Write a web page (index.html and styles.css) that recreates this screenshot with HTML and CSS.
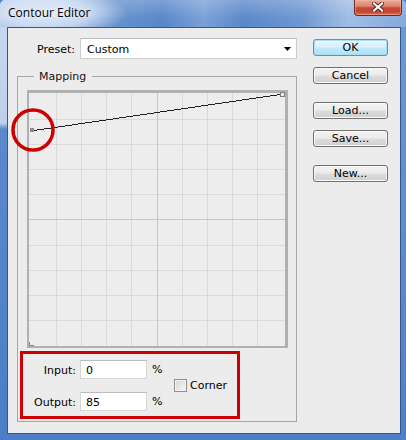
FILE: index.html
```html
<!DOCTYPE html>
<html>
<head>
<meta charset="utf-8">
<title>Contour Editor</title>
<link rel="stylesheet" href="styles.css">
</head>
<body>
<div class="window">
  <div class="titlebar">
    <span class="title">Contour Editor</span>
    <button class="close" aria-label="Close">
      <svg width="12" height="10" viewBox="0 0 12 10">
        <path d="M2 1.5 L10 8.5 M10 1.5 L2 8.5" stroke="#4a2420" stroke-width="4" stroke-linecap="square" fill="none"/>
        <path d="M2 1.5 L10 8.5 M10 1.5 L2 8.5" stroke="#ffffff" stroke-width="2.2" stroke-linecap="square" fill="none"/>
      </svg>
    </button>
  </div>
  <div class="client">
    <div class="main">
      <div class="preset-row">
        <label class="preset-label">Preset:</label>
        <div class="select">
          <span>Custom</span>
          <svg class="arrow" width="7" height="4" viewBox="0 0 7 4"><path d="M0 0 H7 L3.5 4 Z" fill="#000"/></svg>
        </div>
      </div>
      <fieldset class="group">
        <legend>Mapping</legend>
        <div class="graph">
          <svg width="256" height="253" viewBox="0 0 256 253" shape-rendering="crispEdges">
            <g stroke="#dadada" stroke-width="1">
              <path d="M27.5 0 V253 M52.5 0 V253 M77.5 0 V253 M102.5 0 V253 M153.5 0 V253 M178.5 0 V253 M203.5 0 V253 M228.5 0 V253"/>
              <path d="M0 26.5 H256 M0 51.5 H256 M0 76.5 H256 M0 101.5 H256 M0 152.5 H256 M0 177.5 H256 M0 202.5 H256 M0 227.5 H256"/>
            </g>
            <g stroke="#c6c6c6" stroke-width="1">
              <path d="M128.5 0 V253 M0 126.5 H256"/>
            </g>
            <path d="M0.5 249 V252.5 H5" stroke="#8a8a8a" fill="none"/>
            <path d="M5 37.5 L251 1.5" stroke="#231f20" stroke-width="1" fill="none"/>
            <rect x="1" y="35" width="4" height="4" fill="#8c8c8c"/>
            <rect x="251.5" y="-0.5" width="4" height="4" fill="#efefef" stroke="#7c7c7c"/>
          </svg>
        </div>
        <div class="fields">
          <label class="f-label r1">Input:</label>
          <div class="input r1">0</div>
          <span class="pct r1">%</span>
          <label class="f-label r2">Output:</label>
          <div class="input r2">85</div>
          <span class="pct r2">%</span>
          <div class="corner"><span class="check"></span><span>Corner</span></div>
        </div>
      </fieldset>
    </div>
    <div class="buttons">
      <button class="btn default">OK</button>
      <button class="btn">Cancel</button>
      <button class="btn gap">Load...</button>
      <button class="btn">Save...</button>
      <button class="btn gap">New...</button>
    </div>
  </div>
  <svg class="mark-circle" width="46" height="46" viewBox="0 0 46 46">
    <circle cx="23" cy="23" r="20" fill="none" stroke="#cc0000" stroke-width="3.5"/>
  </svg>
  <div class="mark-rect"></div>
</div>
</body>
</html>
```

FILE: styles.css
```css
* { box-sizing: border-box; }

html, body {
  margin: 0;
  padding: 0;
  background: #4d7ec6;
}

.window {
  position: relative;
  width: 406px;
  height: 440px;
  overflow: hidden;
  font-family: "DejaVu Sans", "Liberation Sans", sans-serif;
  font-size: 11px;
  color: #000;
  background:
    linear-gradient(to bottom, #c6d8ef 0, #bcd0eb 96px, #5b89cb 102px, #4c7dc5 100%) left 0 top 27px / 7px 413px no-repeat,
    linear-gradient(to bottom, #6d98d3 0, #4e7fc7 100%) right 0 top 27px / 6px 413px no-repeat,
    #4d7ec6;
  border-radius: 5px 5px 3px 3px;
}

.titlebar {
  height: 27px;
  display: flex;
  justify-content: space-between;
  align-items: flex-start;
  padding: 0 4px 0 8px;
  background:
    linear-gradient(to bottom, rgba(255,255,255,0.22), rgba(255,255,255,0) 70%),
    radial-gradient(ellipse 80px 24px at 48px 13px, rgba(226,236,250,0.95) 0%, rgba(220,232,248,0.7) 55%, rgba(220,232,248,0) 100%),
    linear-gradient(to right, #aac4e8 0%, #93b3df 14%, #6892cf 28%, #5887c9 40%, #7aa0d7 50%, #5b88ca 60%, #6e97d2 74%, #a0bde4 86%, #86a9db 100%);
}

.title {
  font-family: "Open Sans", "DejaVu Sans", sans-serif;
  font-size: 12px;
  line-height: 14px;
  margin-top: 6px;
  color: #000;
  text-shadow: 0 0 6px rgba(255,255,255,0.9);
}

.close {
  width: 48px;
  height: 16px;
  padding: 0;
  margin: 0;
  border: 1px solid #6b2a20;
  border-top: none;
  border-radius: 0 0 4px 4px;
  background: linear-gradient(to bottom, #e8a997 0%, #dc8774 40%, #c94a34 52%, #c6452f 78%, #d9735a 100%);
  box-shadow: inset 0 0 0 1px rgba(255,190,170,0.45);
  display: flex;
  align-items: center;
  justify-content: center;
}

.close svg { display: block; margin-top: -1px; }

.client {
  margin-left: 7px;
  width: 394px;
  height: 407px;
  background: #ececec;
  border: 1px solid #34568a;
  padding: 10px 0 0 9px;
  display: flex;
  align-items: flex-start;
}

.main {
  width: 280px;
  display: flex;
  flex-direction: column;
}

.preset-row {
  display: flex;
  align-items: center;
  height: 21px;
}

.preset-label {
  width: 58px;
  text-align: right;
  margin-right: 5px;
  padding-top: 1px;
}

.select {
  flex: 1;
  height: 21px;
  background: #fff;
  border: 1px solid #cdcdcd;
  border-top-color: #bdbdbd;
  display: flex;
  align-items: center;
  justify-content: space-between;
  padding: 1px 5px 0 6px;
}

.arrow { display: block; }

.group {
  margin: 11px 0 0 0;
  padding: 0 0 10px 0;
  border: 1px solid #a6a6a6;
  min-inline-size: 0;
}

.group legend {
  margin-left: 16px;
  padding: 0 6px 0 5px;
  line-height: 13px;
  color: #111;
}

.graph {
  width: 261px;
  height: 258px;
  margin: 7px 0 0 9px;
  border-style: solid;
  border-color: #b0b0b0;
  border-width: 3px 3px 2px 2px;
  background: #ededed;
}

.graph svg { display: block; overflow: visible; }

.fields {
  margin-top: 12px;
  display: grid;
  grid-template-columns: 62px 67px 27px auto;
  grid-template-rows: 19px 19px;
  row-gap: 13px;
  align-items: center;
}

.f-label {
  grid-column: 1;
  text-align: right;
  padding-right: 4px;
  padding-top: 1px;
}

.r1 { grid-row: 1; }
.r2 { grid-row: 2; }

.input {
  grid-column: 2;
  height: 19px;
  background: #fff;
  border: 1px solid #d6d6d6;
  border-top-color: #bdbdbd;
  padding: 1px 0 0 5px;
  line-height: 17px;
}

.pct {
  grid-column: 3;
  padding-left: 5px;
}

.corner {
  grid-column: 4;
  grid-row: 1 / span 2;
  display: flex;
  align-items: center;
}

.check {
  width: 13px;
  height: 13px;
  border: 1px solid #8e8f8f;
  background: linear-gradient(135deg, #d2d2d2 0%, #e6e6e6 50%, #fbfbfb 100%);
  box-shadow: inset 0 0 0 1px #f3f3f3;
  margin-right: 3px;
}

.buttons {
  margin: 1px 0 0 16px;
  display: flex;
  flex-direction: column;
  gap: 11px;
}

.btn {
  width: 75px;
  height: 17px;
  padding: 0;
  margin: 0;
  font-family: "DejaVu Sans", "Liberation Sans", sans-serif;
  font-size: 11px;
  line-height: 15px;
  color: #000;
  border: 1px solid #707070;
  border-radius: 3px;
  background: linear-gradient(to bottom, #f3f3f3 0%, #ebebeb 48%, #dddddd 52%, #cfcfcf 100%);
  box-shadow: inset 0 0 0 1px #fafafa;
}

.btn.gap { margin-top: 7px; }

.btn.default {
  border-color: #3c9bd8;
  background: linear-gradient(to bottom, #eaf6fd 0%, #d9f0fc 48%, #c4e8fb 52%, #b0dff7 100%);
  box-shadow: inset 0 0 0 1px #a8e0f8;
}

.mark-circle {
  position: absolute;
  left: 10px;
  top: 107px;
}

.mark-rect {
  position: absolute;
  left: 20px;
  top: 351px;
  width: 220px;
  height: 68px;
  border: 3px solid #cc0000;
}
```
